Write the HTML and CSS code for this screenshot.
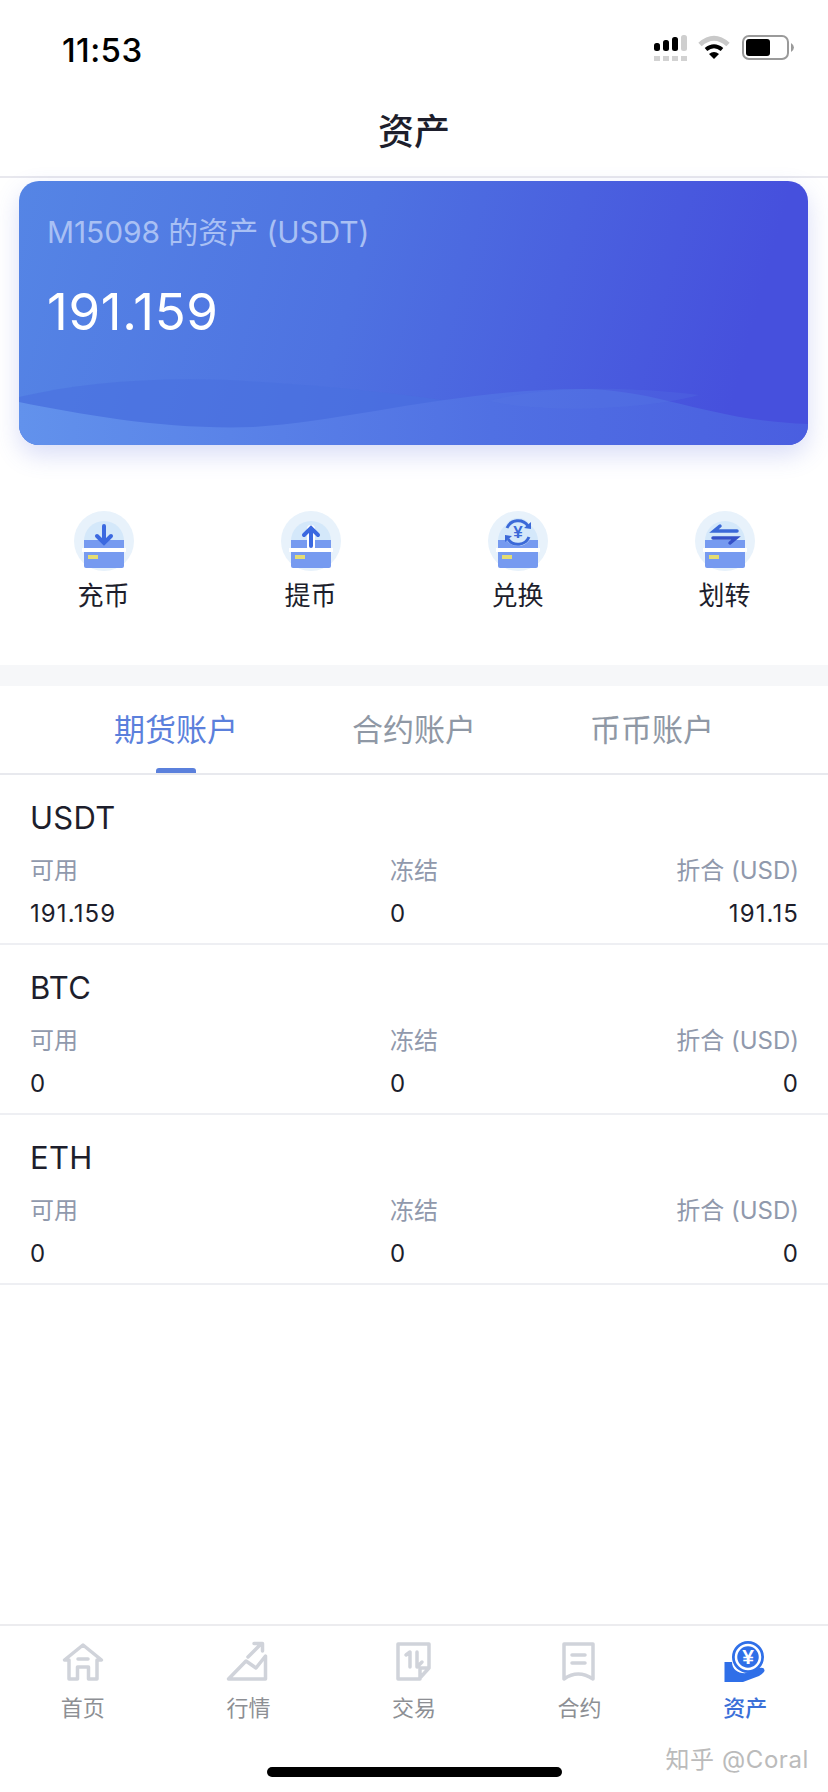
FILE: index.html
```html
<!DOCTYPE html>
<html lang="zh-CN">
<head>
<meta charset="utf-8">
<title>资产</title>
<link rel="stylesheet" href="styles.css">
</head>
<body>
<div class="app">
  <header class="status">
    <span class="time">11:53</span>
    <div class="status-icons">
      <svg class="sig" width="34" height="27" viewBox="0 0 34 27">
        <g fill="#000"><rect x="0" y="8" width="6" height="8" rx="2.5"/><rect x="9" y="5" width="6" height="11" rx="2.5"/><rect x="18" y="2" width="6" height="14" rx="2.5"/></g>
        <rect x="27" y="0" width="6" height="16" rx="2.5" fill="#cfcfcf"/>
        <g fill="#d2d2d2"><rect x="0" y="21" width="6" height="5"/><rect x="9" y="21" width="6" height="5"/><rect x="18" y="21" width="6" height="5"/><rect x="27" y="21" width="6" height="5"/></g>
      </svg>
      <svg class="wifi" width="32" height="25" viewBox="0 0 32 25">
        <path d="M2 9.500 Q16 -3 30 9.500" fill="none" stroke="#c9c9c9" stroke-width="5"/>
        <path d="M8 14.500 Q16 8 24 14.500" fill="none" stroke="#000" stroke-width="4"/>
        <path d="M16 24 L11 19 Q16 15 21 19 Z" fill="#000"/>
      </svg>
      <svg class="batt" width="53" height="25" viewBox="0 0 53 25">
        <rect x="1" y="1" width="45" height="23" rx="6" fill="#fff" stroke="#9a9a9a" stroke-width="2"/>
        <rect x="4" y="4" width="24" height="17" rx="3" fill="#000"/>
        <path d="M49 8 Q52 10 52 12.500 Q52 15 49 17 Z" fill="#9a9a9a"/>
      </svg>
    </div>
  </header>

  <nav class="navbar">资产</nav>

  <section class="card">
    <svg class="waves" viewBox="0 0 789 264" preserveAspectRatio="none">
      <defs>
        <linearGradient id="lw" x1="0" y1="0" x2="1" y2="0">
          <stop offset="0" stop-color="#6292ec"/>
          <stop offset="0.6" stop-color="#5070e3"/>
          <stop offset="1" stop-color="#4a5ee0"/>
        </linearGradient>
      </defs>
      <path d="M0 216 C60 202 130 196 210 199 C290 204 370 210 440 222 L440 264 L0 264 Z" fill="#4a70e0" opacity="0.6"/>
      <path d="M0 221 C70 235 150 249 235 246 C330 240 440 208 562 208 C640 208 690 240 789 243 L789 264 L0 264 Z" fill="url(#lw)"/>
      <path d="M470 220 C520 206 600 204 680 214 C620 230 520 232 470 220 Z" fill="#5b7fe6" opacity="0.2"/>
    </svg>
    <div class="card-label">M15098 的资产 (USDT)</div>
    <div class="card-amount">191.159</div>
  </section>

  <section class="actions">
    <div class="action">
      <svg width="60" height="60" viewBox="0 0 60 60">
        <circle cx="30" cy="30" r="30" fill="#e8f2fb"/><circle cx="30" cy="30" r="20" fill="#d4e8fa"/>
        <rect x="10" y="29" width="40" height="8" fill="#769af0"/><rect x="8" y="37" width="44" height="4" fill="#fff"/>
        <path d="M10 41 H50 V55 Q50 57 48 57 H12 Q10 57 10 55 Z" fill="#769af0"/><rect x="14" y="44" width="10" height="4" fill="#e4dc72"/>
        <path d="M30 15 V32 M23 25 L30 32 L37 25" fill="none" stroke="#3b69e0" stroke-width="4" stroke-linecap="round"/>
      </svg>
      <span>充币</span>
    </div>
    <div class="action">
      <svg width="60" height="60" viewBox="0 0 60 60">
        <circle cx="30" cy="30" r="30" fill="#e8f2fb"/><circle cx="30" cy="30" r="20" fill="#d4e8fa"/>
        <rect x="10" y="29" width="40" height="8" fill="#769af0"/><rect x="8" y="37" width="44" height="4" fill="#fff"/>
        <path d="M10 41 H50 V55 Q50 57 48 57 H12 Q10 57 10 55 Z" fill="#769af0"/><rect x="14" y="44" width="10" height="4" fill="#e4dc72"/>
        <path d="M30 36 V18" fill="none" stroke="#fff" stroke-width="8" stroke-linecap="round"/>
        <path d="M30 35 V17 M23 24 L30 17 L37 24" fill="none" stroke="#3b69e0" stroke-width="4" stroke-linecap="round"/>
      </svg>
      <span>提币</span>
    </div>
    <div class="action">
      <svg width="60" height="60" viewBox="0 0 60 60">
        <circle cx="30" cy="30" r="30" fill="#e8f2fb"/><circle cx="30" cy="30" r="20" fill="#d4e8fa"/>
        <rect x="10" y="29" width="40" height="8" fill="#769af0"/><rect x="8" y="37" width="44" height="4" fill="#fff"/>
        <path d="M10 41 H50 V55 Q50 57 48 57 H12 Q10 57 10 55 Z" fill="#769af0"/><rect x="14" y="44" width="10" height="4" fill="#e4dc72"/>
        <circle cx="30" cy="21" r="14" fill="#d4e8fa"/>
        <path d="M19 17 A12 12 0 0 1 40 15 M41 26 A12 12 0 0 1 20 28" fill="none" stroke="#3b69d8" stroke-width="3"/>
        <path d="M36 17 L43 18 L43 11 Z M24 25 L17 24 L17 31 Z" fill="#3b69d8"/>
        <text x="30" y="27" class="yen">¥</text>
      </svg>
      <span>兑换</span>
    </div>
    <div class="action">
      <svg width="60" height="60" viewBox="0 0 60 60">
        <circle cx="30" cy="30" r="30" fill="#e8f2fb"/><circle cx="30" cy="30" r="20" fill="#d4e8fa"/>
        <rect x="10" y="29" width="40" height="8" fill="#769af0"/><rect x="8" y="37" width="44" height="4" fill="#fff"/>
        <path d="M10 41 H50 V55 Q50 57 48 57 H12 Q10 57 10 55 Z" fill="#769af0"/><rect x="14" y="44" width="10" height="4" fill="#e4dc72"/>
        <path d="M42 20 H19 L25 15" fill="none" stroke="#3b69d8" stroke-width="3.500" stroke-linecap="round"/>
        <path d="M18 27 H41 L35 32" fill="none" stroke="#3551c8" stroke-width="3.500" stroke-linecap="round"/>
      </svg>
      <span>划转</span>
    </div>
  </section>

  <div class="band"></div>

  <div class="tabs">
    <div class="tab active">期货账户</div>
    <div class="tab">合约账户</div>
    <div class="tab">币币账户</div>
  </div>

  <main class="list">
    <article class="row">
      <h2>USDT</h2>
      <div class="cols">
        <span class="lab">可用</span><span class="lab">冻结</span><span class="lab end">折合 (USD)</span>
        <span class="val">191.159</span><span class="val">0</span><span class="val end">191.15</span>
      </div>
    </article>
    <article class="row">
      <h2>BTC</h2>
      <div class="cols">
        <span class="lab">可用</span><span class="lab">冻结</span><span class="lab end">折合 (USD)</span>
        <span class="val">0</span><span class="val">0</span><span class="val end">0</span>
      </div>
    </article>
    <article class="row">
      <h2>ETH</h2>
      <div class="cols">
        <span class="lab">可用</span><span class="lab">冻结</span><span class="lab end">折合 (USD)</span>
        <span class="val">0</span><span class="val">0</span><span class="val end">0</span>
      </div>
    </article>
  </main>

  <footer class="tabbar">
    <div class="items">
      <div class="item">
        <svg class="ti" viewBox="0 0 44 44"><path d="M3.500 20 L22 5 L40.500 20 H36 V39 H27.500 V27 H16.500 V39 H8 V20 Z M17 19 H27"/></svg>
        <span>首页</span>
      </div>
      <div class="item">
        <svg class="ti" viewBox="0 0 44 44"><path d="M2.500 39 L20 21 L30 28 L39.500 16 V39 Z M22 17 L35 4 M28 3.500 H36.500 V11"/></svg>
        <span>行情</span>
      </div>
      <div class="item">
        <svg class="ti" viewBox="0 0 44 44"><path d="M6 4 H37 V28 L27 39 H6 Z M37 28 H28 V39 M14 15 L18 12 V27 M25 12 V27 L30 22"/></svg>
        <span>交易</span>
      </div>
      <div class="item">
        <svg class="ti" viewBox="0 0 44 44"><path d="M6 4 H35 V39 Q20 29 6 39 Z M14 15 H27 M14 23 H27"/></svg>
        <span>合约</span>
      </div>
      <div class="item on">
        <svg class="ti" viewBox="0 0 44 44">
          <path class="fill" d="M1.500 22 H9 C9 30 16 34 24 33 L36 28 Q42 27 41.500 31 Q40 34 36 36 L20 42 H1.500 Z"/>
          <circle class="fill" cx="25" cy="17" r="16"/>
          <circle class="ring" cx="25" cy="17" r="12"/>
          <text x="25" y="24" class="yen2">¥</text>
        </svg>
        <span>资产</span>
      </div>
    </div>
    <div class="home"></div>
    <div class="mark">知乎 @Coral</div>
  </footer>
</div>
</body>
</html>
```
FILE: styles.css
```css
* { box-sizing: border-box; margin: 0; padding: 0; }
html, body { background: #fff; }
body {
  font-family: Inter, "Noto Sans CJK SC", sans-serif;
  color: #1d1e2c;
}
.app {
  width: 828px;
  height: 1792px;
  display: flex;
  flex-direction: column;
  overflow: hidden;
  background: #fff;
}
.status {
  height: 82px;
  flex: none;
  display: flex;
  justify-content: space-between;
  align-items: flex-start;
  padding: 31px 33px 0 62px;
}
.time {
  font-family: Inter, sans-serif;
  font-size: 33px;
  line-height: 38px;
  font-weight: 500;
  color: #000;
  letter-spacing: 0.4px;
}
.status-icons {
  display: flex;
  gap: 12px;
  align-items: flex-start;
  padding-top: 4px;
}
.sig { margin-right: -2px; }
.navbar {
  height: 96px;
  flex: none;
  border-bottom: 2px solid #e8e8ee;
  display: flex;
  align-items: center;
  justify-content: center;
  font-size: 36px;
  font-weight: 500;
}
.card {
  position: relative;
  flex: none;
  height: 264px;
  margin: 3px 20px 0 19px;
  padding: 31px 28px 0;
  border-radius: 20px;
  background: linear-gradient(105deg, #5585e5 0%, #4e72e1 42%, #4650dd 90%);
  box-shadow: 0 10px 24px rgba(80, 100, 220, 0.22);
}
.waves {
  position: absolute;
  left: 0;
  top: 0;
  width: 100%;
  height: 100%;
  border-radius: 20px;
}
.card-label {
  position: relative;
  font-size: 30px;
  line-height: 40px;
  color: #a9c0f4;
  letter-spacing: -0.1px;
}
.card-amount {
  position: relative;
  margin-top: 30px;
  font-size: 51px;
  line-height: 60px;
  color: #fff;
  letter-spacing: 0.7px;
}
.actions {
  flex: none;
  display: grid;
  grid-template-columns: repeat(4, 1fr);
  padding: 66px 0 54px;
}
.action {
  display: flex;
  flex-direction: column;
  align-items: center;
  gap: 10px;
  font-size: 26px;
  line-height: 30px;
}
.yen {
  font-family: "Liberation Sans", sans-serif;
  font-size: 17px;
  font-weight: 700;
  fill: #3b69d8;
  text-anchor: middle;
}
.band {
  height: 21px;
  flex: none;
  background: #f6f7f9;
}
.tabs {
  height: 89px;
  flex: none;
  display: flex;
  justify-content: center;
  border-bottom: 2px solid #e8e9ee;
}
.tab {
  position: relative;
  width: 238px;
  padding-top: 24px;
  text-align: center;
  font-size: 31px;
  line-height: 40px;
  color: #8f98a5;
}
.tab.active { color: #5b80dc; }
.tab.active::after {
  content: "";
  position: absolute;
  left: 99px;
  bottom: 0;
  width: 40px;
  height: 5px;
  border-radius: 3px 3px 0 0;
  background: #5b80dc;
}
.list { flex: 1; }
.row {
  height: 170px;
  padding: 23px 29px 0 30px;
  border-bottom: 2px solid #eeeff3;
}
.row h2 {
  font-size: 31px;
  line-height: 40px;
  font-weight: 400;
  letter-spacing: 0.3px;
}
.cols {
  display: grid;
  grid-template-columns: 360px 1fr 1fr;
  margin-top: 17px;
  row-gap: 11px;
}
.lab {
  font-size: 24px;
  line-height: 32px;
  color: #9099ac;
}
.val {
  font-size: 24px;
  line-height: 32px;
  letter-spacing: 1.1px;
  color: #1d1e2c;
}
.end { text-align: right; }
.tabbar {
  position: relative;
  height: 168px;
  flex: none;
  border-top: 2px solid #ececef;
  padding-top: 14px;
}
.items {
  display: grid;
  grid-template-columns: repeat(5, 1fr);
}
.item {
  display: flex;
  flex-direction: column;
  align-items: center;
  gap: 9px;
  font-size: 22px;
  line-height: 30px;
  color: #8d8f94;
}
.item.on { color: #3a6fd8; font-weight: 500; }
.ti {
  width: 44px;
  height: 44px;
  fill: none;
  stroke: #d0d3da;
  stroke-width: 3.5;
  stroke-linejoin: round;
  stroke-linecap: round;
}
.ti .fill { fill: #2f6fe8; stroke: none; }
.ti .ring { fill: #2f6fe8; stroke: #fff; stroke-width: 2.5; }
.yen2 {
  font-family: "Liberation Sans", sans-serif;
  font-size: 21px;
  font-weight: 700;
  fill: #fff;
  stroke: none;
  text-anchor: middle;
}
.home {
  width: 295px;
  height: 10px;
  margin: 44px auto 0;
  border-radius: 5px;
  background: #000;
}
.mark {
  position: absolute;
  right: 19px;
  bottom: 18px;
  font-size: 24px;
  line-height: 28px;
  color: #bbbbbb;
  letter-spacing: 0.6px;
  text-shadow: 0 0 2px #fff;
}
```
